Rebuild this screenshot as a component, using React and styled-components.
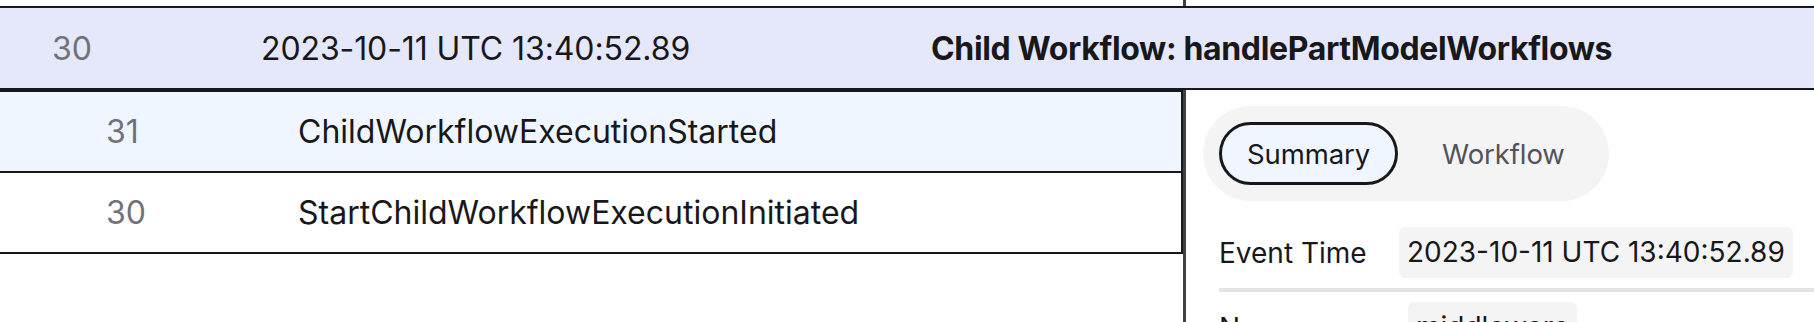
import React from 'react'
import styled, { createGlobalStyle } from 'styled-components'

const GlobalStyle = createGlobalStyle`
  * {
    box-sizing: border-box;
  }

  html,
  body {
    margin: 0;
    background: #ffffff;
  }

  body {
    font-family: Inter, 'Noto Sans', sans-serif;
    color: #18181b;
    overflow: hidden;
  }
`

const Page = styled.div`
  width: 1814px;
  height: 322px;
  overflow: hidden;
  display: flex;
  flex-direction: column;
`

const TopStrip = styled.div`
  flex: none;
  height: 6px;
  display: grid;
  grid-template-columns: 1183px 1fr;

  span:last-child {
    border-left: 3px solid #3f3f46;
  }
`

const GroupRow = styled.div`
  flex: none;
  height: 84px;
  display: flex;
  align-items: center;
  background: #e5e7fb;
  border-top: 2px solid #18181b;
  border-bottom: 2px solid #18181b;
  font-size: 32px;
`

const GroupId = styled.div`
  width: 261px;
  padding-left: 52px;
  color: #71717a;
`

const GroupTime = styled.div`
  width: 670px;
  letter-spacing: -0.1px;
`

const GroupTitle = styled.div`
  font-weight: 700;
  letter-spacing: -0.35px;
`

const Body = styled.div`
  flex: 1;
  display: flex;
  min-height: 0;
`

const EventTable = styled.div`
  flex: none;
  width: 1183px;
  align-self: flex-start;
  border-top: 2px solid #18181b;
  border-right: 2px solid #18181b;
`

const EventRow = styled.div`
  height: 81px;
  display: flex;
  align-items: center;
  border-bottom: 2px solid #18181b;
  background: ${(p) => (p.$active ? '#eff6ff' : '#ffffff')};
  font-size: 32px;
`

const EventId = styled.div`
  width: 298px;
  padding-left: 106px;
  color: #71717a;
`

const EventType = styled.div``

const Panel = styled.div`
  flex: 1;
  border-left: 3px solid #3f3f46;
  padding: 16px 0 0 17px;
`

const TabList = styled.div`
  display: inline-flex;
  gap: 16px;
  padding: 16px;
  background: #f4f4f5;
  border-radius: 999px;
`

const Tab = styled.button`
  height: 63px;
  padding: 0 25px;
  border: 3px solid ${(p) => (p.$active ? '#18181b' : 'transparent')};
  border-radius: 999px;
  background: ${(p) => (p.$active ? '#eff6ff' : 'transparent')};
  color: ${(p) => (p.$active ? '#18181b' : '#52525b')};
  font-family: inherit;
  font-size: 27.5px;
  letter-spacing: -0.1px;
  cursor: pointer;
`

const Details = styled.div`
  margin-top: 16px;
  padding-left: 16px;
`

const DetailRow = styled.div`
  display: flex;
  align-items: center;
  padding: 10px 17px 10px 0;
  border-bottom: 4px solid #e4e4e7;
  font-size: 28px;
`

const DetailLabel = styled.div`
  width: ${(p) => p.$width}px;
  flex: none;
`

const DetailValue = styled.div`
  height: 51px;
  line-height: 51px;
  padding: 0 8px;
  background: #f4f4f5;
  border-radius: 6px;
  white-space: nowrap;
`

const events = [
  { id: 31, type: 'ChildWorkflowExecutionStarted', active: true },
  { id: 30, type: 'StartChildWorkflowExecutionInitiated' },
]

const details = [
  { label: 'Event Time', value: '2023-10-11 UTC 13:40:52.89', width: 180 },
  { label: 'Name', value: 'middleware', width: 189 },
]

const App = () => (
  <>
    <GlobalStyle />
    <Page>
      <TopStrip>
        <span />
        <span />
      </TopStrip>
      <GroupRow>
        <GroupId>30</GroupId>
        <GroupTime>2023-10-11 UTC 13:40:52.89</GroupTime>
        <GroupTitle>Child Workflow: handlePartModelWorkflows</GroupTitle>
      </GroupRow>
      <Body>
        <EventTable>
          {events.map((e) => (
            <EventRow key={e.id + e.type} $active={e.active}>
              <EventId>{e.id}</EventId>
              <EventType>{e.type}</EventType>
            </EventRow>
          ))}
        </EventTable>
        <Panel>
          <TabList>
            <Tab $active>Summary</Tab>
            <Tab>Workflow</Tab>
          </TabList>
          <Details>
            {details.map((d) => (
              <DetailRow key={d.label}>
                <DetailLabel $width={d.width}>{d.label}</DetailLabel>
                <DetailValue>{d.value}</DetailValue>
              </DetailRow>
            ))}
          </Details>
        </Panel>
      </Body>
    </Page>
  </>
)

export default App
